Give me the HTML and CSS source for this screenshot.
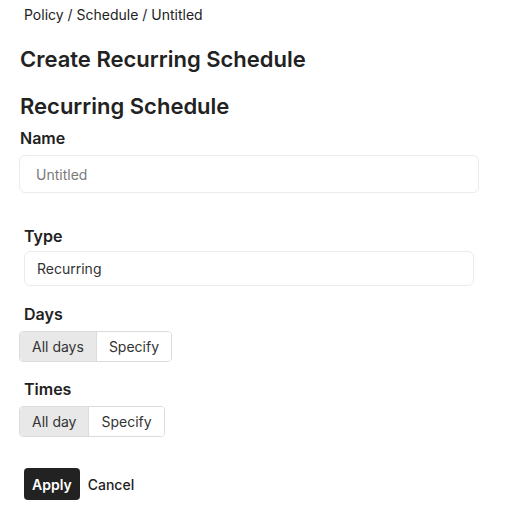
FILE: index.html
```html
<!DOCTYPE html>
<html>
<head>
<meta charset="utf-8">
<link rel="stylesheet" href="styles.css">
</head>
<body>
<div class="page">
  <nav class="crumbs">Policy / Schedule / Untitled</nav>
  <h1 class="title">Create Recurring Schedule</h1>
  <h2 class="subtitle">Recurring Schedule</h2>
  <div class="field">
    <label class="label">Name</label>
    <div class="input name-input"><span class="placeholder">Untitled</span></div>
  </div>
  <div class="inner">
    <div class="field type-field">
      <label class="label">Type</label>
      <div class="input type-input"><span class="value">Recurring</span></div>
    </div>
    <div class="field seg-field">
      <label class="label">Days</label>
      <div class="segmented">
        <button class="seg active seg-days">All days</button>
        <button class="seg">Specify</button>
      </div>
    </div>
    <div class="field seg-field">
      <label class="label">Times</label>
      <div class="segmented">
        <button class="seg active seg-day">All day</button>
        <button class="seg">Specify</button>
      </div>
    </div>
    <div class="actions">
      <button class="apply">Apply</button>
      <button class="cancel">Cancel</button>
    </div>
  </div>
</div>
</body>
</html>
```
FILE: styles.css
```css
* { box-sizing: border-box; }
html, body { margin: 0; padding: 0; background: #fff; }
body {
  font-family: Inter, "Noto Sans", sans-serif;
  color: #222;
}
.page {
  padding: 5px 29px 0 20px;
  width: 508px;
}
.crumbs {
  font-size: 14px;
  line-height: 20px;
  padding-left: 4px;
  color: #222;
}
.title {
  margin: 20px 0 0;
  font-size: 22px;
  line-height: 28px;
  font-weight: 600;
}
.subtitle {
  margin: 19px 0 0;
  font-size: 22px;
  line-height: 28px;
  font-weight: 600;
}
.field { display: flex; flex-direction: column; }
.label {
  font-size: 16px;
  line-height: 22px;
  font-weight: 600;
  color: #222;
}
.field > .label { margin-top: 7px; }
.input {
  border: 1px solid #ebebeb;
  border-radius: 6px;
  display: flex;
  align-items: center;
  font-size: 14px;
}
.name-input {
  margin-top: 6px;
  height: 38px;
  width: 460px;
  margin-left: -1px;
  padding-left: 16px;
}
.placeholder { color: #7a7a7a; }
.inner { padding-left: 4px; }
.type-field > .label { margin-top: 32px; }
.type-input {
  margin-top: 4px;
  height: 35px;
  width: 450px;
  padding-left: 12px;
}
.value { color: #333; }
.seg-field > .label { margin-top: 17px; }
.seg-field + .seg-field > .label { margin-top: 16px; }
.segmented {
  margin-top: 6px;
  margin-left: -5px;
  display: flex;
  align-self: flex-start;
  border: 1px solid #dcdcdc;
  border-radius: 4px;
  overflow: hidden;
}
.seg {
  font-family: inherit;
  font-size: 14px;
  height: 29px;
  border: 0;
  background: #fff;
  color: #333;
  padding: 0 12px;
  cursor: pointer;
}
.seg.active {
  background: #e8e8e8;
  border-right: 1px solid #dcdcdc;
  padding: 0 12px;
}
.actions {
  margin-top: 31px;
  display: flex;
  align-items: center;
}
.apply {
  font-family: inherit;
  font-size: 14px;
  font-weight: 600;
  height: 32px;
  padding: 0 8px;
  background: #222;
  color: #fff;
  border: 0;
  border-radius: 4px;
}
.cancel {
  font-family: inherit;
  font-size: 14px;
  font-weight: 500;
  border: 0;
  background: none;
  color: #222;
  padding: 0 0 0 8px;
}
```
